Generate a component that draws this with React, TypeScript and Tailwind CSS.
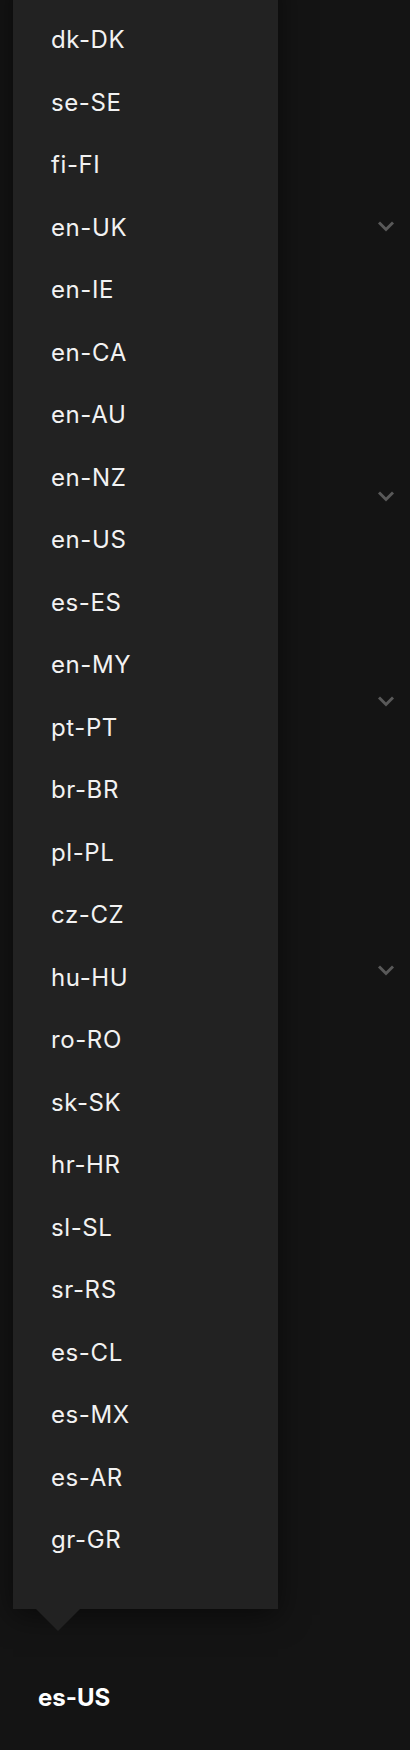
import React from "react";

const locales = [
  "dk-DK", "se-SE", "fi-FI", "en-UK", "en-IE", "en-CA", "en-AU", "en-NZ", "en-US",
  "es-ES", "en-MY", "pt-PT", "br-BR", "pl-PL", "cz-CZ", "hu-HU", "ro-RO", "sk-SK",
  "hr-HR", "sl-SL", "sr-RS", "es-CL", "es-MX", "es-AR", "gr-GR",
];

const sections = [
  { cls: "mt-[198px]" },
  { cls: "mt-[214px]" },
  { cls: "mt-[149px]" },
  { cls: "mt-[213px]" },
];

function Chevron() {
  return (
    <svg width="16" height="11" viewBox="0 0 16 11" fill="none">
      <path d="M2 2.5 L8 8.5 L14 2.5" stroke="#595959" strokeWidth="3" strokeLinecap="square" />
    </svg>
  );
}

export default function App() {
  return (
    <div
      className="relative h-[1750px] w-full overflow-hidden bg-[#141414] text-[#f2f2f2] flex flex-col"
      style={{ fontFamily: "Inter, 'Liberation Sans', sans-serif" }}
    >
      <div className="flex-1 flex flex-col">
        {sections.map((s, i) => (
          <div key={i} className={`${s.cls} h-[56px] flex items-center justify-end pr-[16px]`}>
            <Chevron />
          </div>
        ))}
      </div>

      <footer className="pl-[38px] pb-[38px]">
        <button className="text-[24px] leading-[28px] font-bold text-white">es-US</button>
      </footer>

      <div className="absolute left-[13px] bottom-[141px] w-[265px]">
        <ul className="bg-[#222222] pt-[37.5px] pb-[37.5px] shadow-[0_6px_28px_rgba(0,0,0,0.55)]">
          {locales.map((l) => (
            <li key={l} className="h-[62.5px] flex items-center pl-[38px] text-[24px] tracking-[0.6px]">
              {l}
            </li>
          ))}
        </ul>
        <div className="absolute top-full left-[23px] w-0 h-0 border-l-[22px] border-r-[22px] border-t-[22px] border-l-transparent border-r-transparent border-t-[#222222]" />
      </div>
    </div>
  );
}
